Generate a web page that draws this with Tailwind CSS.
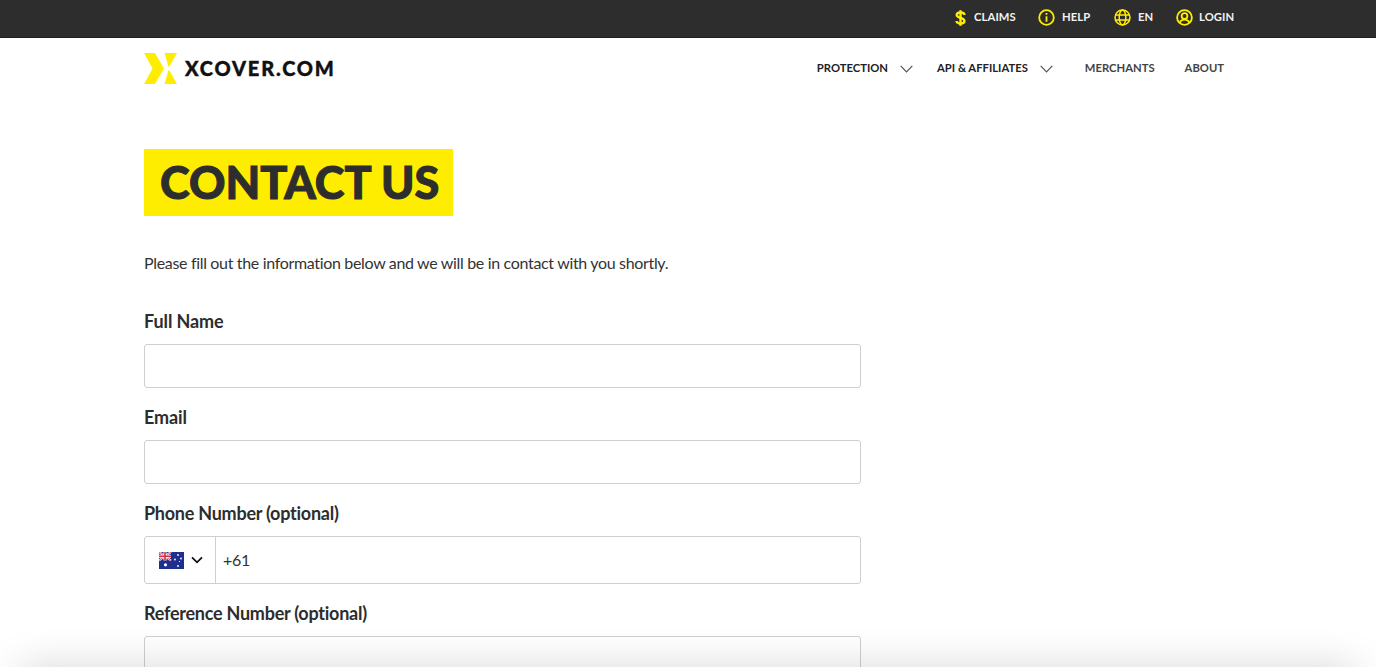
<!DOCTYPE html>
<html lang="en">
<head>
  <meta charset="UTF-8" />
  <meta name="viewport" content="width=device-width, initial-scale=1.0" />
  <title>Contact Us</title>
  <script src="https://cdn.jsdelivr.net/npm/@tailwindcss/browser@4"></script>
</head>
<body class="bg-white h-[667px] overflow-hidden relative font-['Lato',sans-serif] text-[#2d2d2d]">
  <!-- top bar -->
  <div class="h-[38px] bg-[#2d2d2d] border-b border-[#1f1f1f] flex items-center pl-[955px] pb-[2px] text-[11.25px] font-bold text-[#f2f2f2] tracking-[0.1px]">
    <a class="flex items-center gap-[8px] w-[83px]">
      <svg class="w-[11px] h-[16px]" viewBox="0 0 12 17" fill="none" stroke="#ffed00" stroke-width="2.600"><path d="M10.300 5.200c0-1.800-1.900-2.700-4.300-2.700S1.900 3.500 1.900 5.200C1.900 9 10.300 7.800 10.300 11.700c0 1.800-1.900 2.800-4.300 2.800s-4.300-1-4.300-2.800"/><path d="M6 0v17"/></svg>
      CLAIMS
    </a>
    <a class="flex items-center gap-[7px] w-[76px]">
      <svg class="w-[17px] h-[17px]" viewBox="0 0 17 17" fill="none" stroke="#ffed00" stroke-width="1.800"><circle cx="8.500" cy="8.500" r="7.300"/><path d="M8.500 7.300v5.400M8.500 4v1.800"/></svg>
      HELP
    </a>
    <a class="flex items-center gap-[7px] w-[62px]">
      <svg class="w-[17px] h-[17px]" viewBox="0 0 17 17" fill="none" stroke="#ffed00" stroke-width="1.500"><circle cx="8.500" cy="8.500" r="7.500"/><ellipse cx="8.500" cy="8.500" rx="3.300" ry="7.500"/><path d="M1.500 6h14M1.500 11h14"/></svg>
      EN
    </a>
    <a class="flex items-center gap-[6px]">
      <svg class="w-[17px] h-[17px]" viewBox="0 0 17 17" fill="none" stroke="#ffed00" stroke-width="1.800"><circle cx="8.500" cy="8.500" r="7.400"/><circle cx="8.500" cy="7" r="2.900"/><path d="M3.800 13.800c.6-2.100 2.500-3.100 4.700-3.100s4.100 1 4.700 3.100"/></svg>
      LOGIN
    </a>
  </div>

  <!-- main nav -->
  <div class="h-[60px] pl-[144px] flex items-center justify-between">
    <a class="flex items-center gap-[8px]">
      <svg class="w-[33px] h-[31px]" viewBox="0 0 33 31" fill="#ffed00"><path d="M0 0h11l9 15.500L11 31H0l8.500-15.500z"/><path d="M20.500 0H33l-7 12.500-1.500 1.500zM24.500 17l1.500 1.500L33 31H20.500z"/></svg>
      <span class="text-[20px] leading-none font-black tracking-[1.800px] text-[#111] [-webkit-text-stroke:0.4px_#111]">XCOVER.COM</span>
    </a>
    <nav class="flex items-center pt-[1px] text-[11.25px] font-bold text-[#222] pr-[152px]">
      <a class="flex items-center">PROTECTION
        <svg class="w-[13px] h-[8px] ml-[12px]" viewBox="0 0 13 8" fill="none" stroke="#555" stroke-width="1.200"><path d="M.7.800l5.800 6 5.800-6"/></svg>
      </a>
      <a class="flex items-center ml-[24px]">API &amp; AFFILIATES
        <svg class="w-[13px] h-[8px] ml-[12px]" viewBox="0 0 13 8" fill="none" stroke="#555" stroke-width="1.200"><path d="M.7.800l5.800 6 5.800-6"/></svg>
      </a>
      <a class="ml-[32px] text-[#444]">MERCHANTS</a>
      <a class="ml-[30px] text-[#444]">ABOUT</a>
    </nav>
  </div>

  <!-- content -->
  <main class="pl-[144px] pt-[51px]">
    <h1 class="w-[309px] h-[67px] bg-[#ffed00] px-[16px] flex items-center whitespace-nowrap text-[45px] font-black leading-none text-[#2d2d2d] [-webkit-text-stroke:1px_#2d2d2d]">CONTACT US</h1>
    <p class="mt-[35px] text-[16px] tracking-[-0.33px] leading-[24px] text-[#333]">Please fill out the information below and we will be in contact with you shortly.</p>
    <form class="mt-[34px] w-[717px]">
      <label class="block text-[18px] tracking-[-0.1px] font-bold leading-[24px]">Full Name</label>
      <input type="text" class="block mt-[11px] w-full h-[44px] border border-[#cdcfd3] rounded-[3px]" />
      <label class="block mt-[17px] text-[18px] tracking-[-0.1px] font-bold leading-[24px]">Email</label>
      <input type="text" class="block mt-[11px] w-full h-[44px] border border-[#cdcfd3] rounded-[3px]" />
      <label class="block mt-[17px] text-[18px] tracking-[-0.25px] font-bold leading-[24px]">Phone Number (optional)</label>
      <div class="mt-[11px] h-[48px] flex border border-[#cdcfd3] rounded-[3px]">
        <div class="w-[71px] flex items-center border-r border-[#cdcfd3] pl-[14px]">
          <svg class="w-[25px] h-[17px]" viewBox="0 0 25 17">
            <rect width="25" height="17" fill="#1f2f8f"/>
            <path d="M0 0l12 8.500M12 0 0 8.500" stroke="#fff" stroke-width="2"/>
            <path d="M0 0l12 8.500M12 0 0 8.500" stroke="#d8283c" stroke-width=".8"/>
            <path d="M6 0v8.500M0 4.250h12" stroke="#fff" stroke-width="3"/>
            <path d="M6 0v8.500M0 4.250h12" stroke="#d8283c" stroke-width="1.600"/>
            <circle cx="6.500" cy="12.800" r="1.600" fill="#fff"/>
            <circle cx="19" cy="3" r=".9" fill="#fff"/>
            <circle cx="19" cy="14" r=".9" fill="#fff"/>
            <circle cx="16" cy="7.500" r=".9" fill="#fff"/>
            <circle cx="22" cy="6.500" r=".9" fill="#fff"/>
            <circle cx="20.500" cy="9.500" r=".6" fill="#fff"/>
          </svg>
          <svg class="w-[12px] h-[8px] ml-[7px]" viewBox="0 0 12 8" fill="none" stroke="#111" stroke-width="1.800"><path d="M1 1.300l5 5 5-5"/></svg>
        </div>
        <span class="flex items-center pl-[7px] text-[16px] tracking-[-0.3px] text-[#333]">+61</span>
      </div>
      <label class="block mt-[17px] text-[18px] tracking-[-0.25px] font-bold leading-[24px]">Reference Number (optional)</label>
      <input type="text" class="block mt-[11px] w-full h-[44px] border border-[#cdcfd3] rounded-[3px]" />
    </form>
  </main>

  <!-- shadow of the panel sitting just below the fold -->
  <div class="absolute left-[20px] right-[20px] top-[667px] h-[40px] shadow-[0_0_40px_rgba(0,0,0,0.16)]"></div>
</body>
</html>
